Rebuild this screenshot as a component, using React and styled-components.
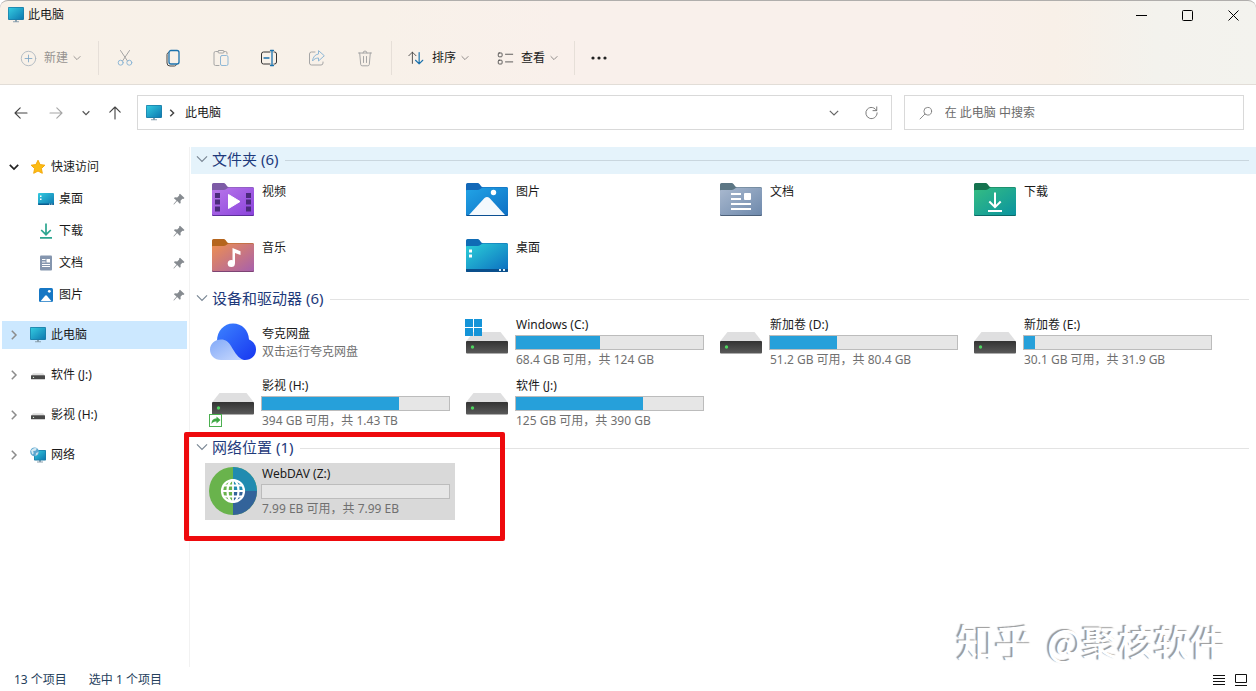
import React from 'react';
import styled, { createGlobalStyle, css } from 'styled-components';

const GlobalStyle = createGlobalStyle`
  * {
    box-sizing: border-box;
  }
  body {
    margin: 0;
    background: #fff;
    color: #1a1a1a;
    font-family: 'Noto Sans', 'Noto Sans CJK SC', sans-serif;
    font-size: 12px;
    line-height: 16px;
  }
  button,
  input {
    font: inherit;
    color: inherit;
  }
  svg {
    display: block;
    flex: none;
  }
`;

const plainButton = css`
  display: flex;
  align-items: center;
  padding: 0;
  border: 0;
  background: none;
  text-align: left;
`;

const Window = styled.div`
  display: flex;
  flex-direction: column;
  min-height: 100vh;
`;

const Header = styled.header`
  border-top: 1px solid #b0aeac;
  border-bottom: 1px solid #e2ddd7;
  border-radius: 8px 8px 0 0;
  background: linear-gradient(
    90deg,
    #f8f1e8 0%,
    #f8f1e9 30%,
    #f9f0eb 45%,
    #f9f0eb 76%,
    #f8f0e8 84%,
    #f3f2ed 92%,
    #f3f3ee 100%
  );
`;

const TitleBar = styled.div`
  display: flex;
  align-items: center;
  height: 30px;
  padding: 0 0 2px 8px;
`;

const WindowTitle = styled.h1`
  flex: 1;
  margin: 0 0 0 4px;
  font-size: 12px;
  font-weight: 400;
`;

const CaptionButton = styled.button`
  ${plainButton};
  justify-content: center;
  width: 46px;
  height: 28px;
`;

const Toolbar = styled.div`
  display: flex;
  align-items: center;
  height: 53px;
  padding-left: 20px;
`;

const Divider = styled.span`
  width: 1px;
  height: 34px;
  margin: 0 ${({ $right = 2 }) => $right}px 0 ${({ $left = 2 }) => $left}px;
  background: #e6dfd8;
`;

const IconButton = styled.button`
  ${plainButton};
  justify-content: center;
  width: ${({ $width = 48 }) => $width}px;
  height: 34px;
  color: ${({ disabled }) => (disabled ? '#a6a6a6' : '#444')};
`;

const MenuButton = styled.button`
  ${plainButton};
  gap: 7px;
  height: 34px;
  margin-right: ${({ $right = 0 }) => $right}px;
  padding-top: 1px;
  color: ${({ disabled }) => (disabled ? '#969390' : '#1a1a1a')};

  svg:last-child {
    margin-left: -2px;
  }
`;

const AddressRow = styled.div`
  display: flex;
  align-items: center;
  padding: 10px 12px 17px 4px;
`;

const AddressBar = styled.div`
  display: flex;
  flex: 753 1 0;
  align-items: center;
  height: 35px;
  margin: 0 12px 0 5px;
  padding-left: 8px;
  border: 1px solid #d9d9d9;
`;

const Crumb = styled.button`
  ${plainButton};
  flex: 1;
  gap: 5px;
  margin-left: 6px;
`;

const SearchBox = styled.label`
  display: flex;
  flex: 342 1 0;
  align-items: center;
  gap: 12px;
  height: 35px;
  border: 1px solid #d9d9d9;

  svg {
    margin-left: 14px;
  }
`;

const SearchInput = styled.input`
  flex: 1;
  min-width: 0;
  padding: 0;
  border: 0;
  outline: 0;
  background: none;

  &::placeholder {
    color: #6b6b6b;
    opacity: 1;
  }
`;

const Body = styled.div`
  display: flex;
  flex: 1;
`;

const Sidebar = styled.nav`
  flex: none;
  width: 190px;
  padding: 6px 2px 0;
  border-right: 1px solid #f2f2f2;
`;

const TreeList = styled.ul`
  display: flex;
  flex-direction: column;
  gap: ${({ $nested }) => ($nested ? 4 : 12)}px;
  margin: ${({ $nested }) => ($nested ? '4px 0 0' : 0)};
  padding: 0;
  list-style: none;
`;

const TreeRow = styled.a`
  display: flex;
  align-items: center;
  gap: 5px;
  height: 28px;
  padding: 0 2px 0 ${({ $nested }) => ($nested ? 36 : 7)}px;
  background: ${({ $selected }) => ($selected ? '#cce8ff' : 'none')};
  color: inherit;
  text-decoration: none;
`;

const TreeArrow = styled.span`
  width: 16px;
  color: ${({ $open }) => ($open ? '#222' : '#8c8c8c')};
`;

const TreeLabel = styled.span`
  flex: 1;
`;

const Content = styled.main`
  flex: 1;
  min-width: 0;
  padding-left: 1px;
`;

const Group = styled.section`
  position: relative;
`;

const GroupHeader = styled.h2`
  display: flex;
  align-items: center;
  gap: 7px;
  height: 27px;
  margin: 0;
  padding-right: 7px;
  background: ${({ $active }) => ($active ? '#e5f3fb' : 'none')};
  color: #1e3a7b;
  font-size: 15px;
  font-weight: 400;
  line-height: 20px;

  &::after {
    content: '';
    flex: 1;
    height: 1px;
    background: ${({ $active }) => ($active ? '#c9d6de' : '#e3e3e3')};
  }
`;

const GroupToggle = styled.button`
  ${plainButton};
  gap: 4px;
  padding: 0 0 3px 5px;
`;

const FolderGrid = styled.div`
  display: grid;
  grid-template-columns: repeat(auto-fill, 250px);
  column-gap: 4px;
  padding-left: 14px;
`;

const DriveGrid = styled(FolderGrid)`
  row-gap: 4px;
  padding-top: 1px;
  padding-bottom: 3px;
`;

const Tile = styled.button`
  ${plainButton};
  gap: 4px;
  height: 57px;
  padding: 0 5px 0 4px;
  background: ${({ $selected }) => ($selected ? '#d9d9d9' : 'none')};
`;

const FolderTile = styled(Tile)`
  align-items: flex-start;
  height: 56px;
  padding-top: 8px;
`;

const TileIcon = styled.span`
  display: flex;
  flex: none;
  justify-content: center;
  width: 48px;
`;

const TileText = styled.span`
  display: flex;
  flex: 1;
  flex-direction: column;
  gap: 2px;
`;

const Name = styled.span`
  padding-left: 1px;
`;

const FolderName = styled(Name)`
  padding-top: 2px;
`;

const Note = styled(Name)`
  color: #707070;
`;

const Meter = styled.span`
  height: 15px;
  border: 1px solid #bcbcbc;
  background: #e6e6e6;
`;

const MeterFill = styled.span`
  display: block;
  height: 100%;
  background: #26a0da;
`;

const Highlight = styled.div`
  position: absolute;
  top: -3px;
  left: -7px;
  width: 321px;
  height: 109px;
  border: 5px solid #ee0a0d;
  border-radius: 2px;
  pointer-events: none;
`;

const StatusBar = styled.footer`
  display: flex;
  align-items: center;
  gap: 22px;
  height: 24px;
  padding: 1px 8px 0 14px;
  color: #24405c;
`;

const ViewModes = styled.div`
  display: flex;
  gap: 8px;
  margin-left: auto;
  color: #111;
`;

const ModeButton = styled.button`
  ${plainButton};
`;

const Watermark = styled.div`
  position: absolute;
  right: 30px;
  bottom: 24px;
  display: flex;
  align-items: center;
  gap: 14px;
  color: #fff;
  font-family: 'Noto Sans CJK SC', sans-serif;
  font-size: 36px;
  font-weight: 500;
  line-height: 52px;
  text-shadow: -2px -1px 1px #999;
  pointer-events: none;
`;

const Brand = styled.span`
  font-size: 38px;
`;

const Chevron = ({ size = 8, width = 1.2, turn = 0, color = 'currentColor' }) => (
  <svg width={size} height={size} viewBox="0 0 10 10" fill="none" stroke={color} strokeWidth={width}>
    <path d="M.8 2.8 5 7l4.2-4.2" transform={`rotate(${turn} 5 5)`} />
  </svg>
);

const Line = ({ size = 20, color = 'currentColor', children }) => (
  <svg width={size} height={size} viewBox="0 0 20 20" fill="none" stroke={color} strokeLinecap="round" strokeLinejoin="round">
    {children}
  </svg>
);

const MonitorIcon = () => (
  <svg width="16" height="16" viewBox="0 0 16 16">
    <defs>
      <linearGradient id="monitor" x1="0" y1="0" x2="1" y2="1">
        <stop offset="0" stopColor="#34cbe0" />
        <stop offset="1" stopColor="#0d78b0" />
      </linearGradient>
    </defs>
    <path fill="#8aa0ae" d="M7 12h2v2.2h2v1H5v-1h2z" />
    <rect width="16" height="13" rx="1" fill="#1b7ba6" />
    <rect x=".7" y=".7" width="14.6" height="11.6" rx=".5" fill="url(#monitor)" />
  </svg>
);

const NetworkIcon = () => (
  <svg width="16" height="16" viewBox="0 0 16 16">
    <path fill="#8aa0ae" d="M9 13h2v1.6h2v1H7v-1h2z" />
    <rect x="4" y="3" width="12" height="10.5" rx=".8" fill="#1b7ba6" />
    <rect x="4.7" y="3.7" width="10.6" height="9" fill="url(#monitor)" />
    <circle cx="4.6" cy="4.8" r="4.4" fill="#5ba6cf" />
    <path d="M1 3.6c2-2.6 4-3.2 6-2L5.5 3.8 3.2 4l.5 2.5-1.5 1z" fill="#d5e9f2" />
    <path d="m6 6 2.5-1-.8 2.6L5.5 9z" fill="#c5dfeb" />
  </svg>
);

const StarIcon = () => (
  <svg width="16" height="16" viewBox="0 0 16 16">
    <path
      d="m8 1.2 2.1 4.4 4.8.6-3.5 3.3.9 4.8L8 12l-4.3 2.3.9-4.8-3.5-3.3 4.8-.6z"
      fill="#fbbc14"
      stroke="#f5a90a"
      strokeLinejoin="round"
    />
  </svg>
);

const SmallDesktopIcon = () => (
  <svg width="16" height="16" viewBox="0 0 16 16">
    <rect y="2" width="16" height="12" rx="1" fill="url(#monitor)" />
    <path d="M2 4.5h1.5V6H2zM2 7.500h1.500V9H2z" fill="#fff" />
    <path d="M0 12.500h16v.5a1 1 0 0 1-1 1H1a1 1 0 0 1-1-1z" fill="#0b5c8f" />
    <path d="M11 12.700h1.200v.8H11zm2.200 0h1.200v.8h-1.200z" fill="#fff" />
  </svg>
);

const SmallDownloadIcon = () => (
  <svg width="16" height="16" viewBox="0 0 16 16" fill="none" stroke="#2ba58f" strokeWidth="1.700">
    <path d="M8 .5v11M3.200 7 8 11.700 12.800 7M2 14.800h12" />
  </svg>
);

const SmallDocumentIcon = () => (
  <svg width="16" height="16" viewBox="0 0 16 16">
    <rect x="2" y=".5" width="12" height="15" rx="1" fill="#8495ae" />
    <path d="M4 4.500h3.500M4 7h3.500M4 9.500h8M4 11.500h8" stroke="#fff" />
    <path d="M8.500 4H12v3.500H8.500z" fill="#fff" />
  </svg>
);

const SmallPictureIcon = () => (
  <svg width="16" height="16" viewBox="0 0 16 16">
    <rect x="1" y="1" width="14" height="14" rx="1.500" fill="#1677c4" />
    <path d="m2.500 14.300 4.600-5.500q.9-.9 1.800 0l4.600 5.500z" fill="#fff" />
    <circle cx="11.300" cy="4.300" r="1.400" fill="#fff" />
  </svg>
);

const SmallDriveIcon = () => (
  <svg width="16" height="16" viewBox="0 0 16 16">
    <path d="M3 6.200h10l2 2.300H1z" fill="#dcdcdc" />
    <rect x="1" y="8.300" width="14" height="4" rx=".5" fill="#484848" />
    <circle cx="3.500" cy="10.400" r=".7" fill="#d6e8d6" />
  </svg>
);

const PinIcon = () => (
  <svg width="12" height="12" viewBox="0 0 12 12" fill="#868b90">
    <path d="m7 .8 4.500 4.300-1.200.8-.9-.2-1.900 2 .2 2.200-.9.8-2.700-2.600L1 11.500l-.6-.3L3.500 7.600.9 5.200l1-.9 2.300.1 2-2-.1-.9z" />
  </svg>
);

const Folder = ({ id, tab, from, to, edge, children }) => (
  <svg width="42" height="34" viewBox="0 0 42 34">
    <defs>
      <linearGradient id={id} x1="0" y1="0" x2="1" y2="1">
        <stop offset="0" stopColor={from} />
        <stop offset="1" stopColor={to} />
      </linearGradient>
    </defs>
    <path d="M0 2.500A1.500 1.500 0 0 1 1.500 1H12c1.600 0 3 4 4.500 4H40.500A1.500 1.500 0 0 1 42 6.500V20H0z" fill={tab} />
    <path
      d="M0 8.500Q0 8 .8 8H12c2.500 0 3-2.400 5-2.400H40.500A1.500 1.500 0 0 1 42 7v25.500a1.500 1.500 0 0 1-1.500 1.500h-39A1.500 1.500 0 0 1 0 32.500z"
      fill={`url(#${id})`}
    />
    <path d="M0 32.200a1.800 1.800 0 0 0 1.500.8h39a1.800 1.800 0 0 0 1.500-.8v.3a1.500 1.500 0 0 1-1.500 1.500h-39A1.500 1.500 0 0 1 0 32.500z" fill={edge} />
    {children}
  </svg>
);

const VideosFolder = () => (
  <Folder id="videos" tab="#7d5ba6" from="#b978ea" to="#8a42dc" edge="#5b2f99">
    <path d="M3 11h5v5H3zM3 17.500h5v5H3zM3 24.500h5v5H3zM34 11h5v5h-5zM34 17.500h5v5h-5zM34 24.500h5v5h-5z" fill="#4b2a7c" />
    <path d="M16.500 12.500v14l11.500-7z" fill="#fff" stroke="#fff" strokeLinejoin="round" />
  </Folder>
);

const PicturesFolder = () => (
  <Folder id="pictures" tab="#1268b8" from="#22a4e6" to="#0d6fc4" edge="#0b4f92">
    <path d="M3 33 18.500 16q2.500-2 5 0L39 33z" fill="#f4f9fd" />
    <circle cx="27.500" cy="10.500" r="2.700" fill="#fff" />
  </Folder>
);

const DocumentsFolder = () => (
  <Folder id="documents" tab="#5c7684" from="#a9b9cf" to="#6d88ab" edge="#4c6079">
    <path d="M11 12h10M11 17h10M11 22h20M11 27h20" stroke="#fff" strokeWidth="2" />
    <rect x="24" y="11" width="7" height="7" rx="1" fill="#fff" />
  </Folder>
);

const DownloadsFolder = () => (
  <Folder id="downloads" tab="#15734f" from="#35bd82" to="#0a93a0" edge="#0b6a68">
    <path d="M21 10.500v14.500M15.300 19.500 21 25.200l5.700-5.700M14 29h14" stroke="#fff" strokeWidth="2" fill="none" />
  </Folder>
);

const MusicFolder = () => (
  <Folder id="music" tab="#b5651d" from="#ee9050" to="#a65fae" edge="#7d4474">
    <circle cx="19.300" cy="25.500" r="3.600" fill="#fff" />
    <path d="M20.500 25.500V10l8 3.200V17l-5.500-2v10.500z" fill="#fff" />
  </Folder>
);

const DesktopFolder = () => (
  <Folder id="desktop" tab="#0f6cb5" from="#2cd0d8" to="#0b6cc0" edge="#0a4a86">
    <path d="M3 11.500h3v3H3zM3 16.500h3v3H3z" fill="#fff" />
    <path d="M0 31h42v1.500a1.500 1.500 0 0 1-1.500 1.500h-39A1.500 1.500 0 0 1 0 32.500z" fill="#0a4f8c" />
    <path d="M33 31h2v2h-2zM37 31h2v2h-2z" fill="#d8edf8" />
  </Folder>
);

const DriveIcon = ({ windows, shared }) => (
  <svg width="48" height="48" viewBox="0 0 48 48">
    <defs>
      <linearGradient id="drive" x1="0" y1="0" x2="0" y2="1">
        <stop offset="0" stopColor="#333" />
        <stop offset="1" stopColor="#5a5a5a" />
      </linearGradient>
    </defs>
    <path d="M10.500 13h27L45 22.500H3z" fill="#dfdfe0" />
    <rect x="3" y="22" width="42" height="12.500" rx="1" fill="url(#drive)" />
    <circle cx="9.500" cy="28" r="1.700" fill="#4ed35f" />
    {windows && <path d="M2 0h8v8H2zM11 0h8v8h-8zM2 9h8v8H2zM11 9h8v8h-8z" fill="#1494d8" />}
    {shared && (
      <>
        <rect x=".5" y="34.500" width="12" height="12" fill="#fff" stroke="#4caf50" />
        <path d="M2.500 44c0-4 2-5.500 5-5.500v-2l4 3.500-4 3.500v-2c-2 0-3.800.5-5 2.500z" fill="#3fa845" />
      </>
    )}
  </svg>
);

const CloudIcon = () => (
  <svg width="48" height="40" viewBox="0 0 48 40">
    <defs>
      <linearGradient id="cloud" x1="0" y1="0" x2="1" y2="1">
        <stop offset="0" stopColor="#3c83ff" />
        <stop offset="1" stopColor="#1736f0" />
      </linearGradient>
      <linearGradient id="cloudFront" x1="0" y1="0" x2="1" y2="1">
        <stop offset="0" stopColor="#83aaf8" />
        <stop offset="1" stopColor="#c9d9fd" />
      </linearGradient>
    </defs>
    <path d="M8 18C8 8 15 .5 24 .5S39.500 7 40 16.500c4.500 2 7 5.500 7 10 0 6-4.500 10.500-11 10.500H24z" fill="url(#cloud)" />
    <path d="M12 16.500c5 0 7.500 2.500 10 6.500 4.500 7.500 7 12 13 14H12C5.500 37 1 32.500 1 26.700s4.500-10.200 11-10.200z" fill="url(#cloudFront)" />
  </svg>
);

const WebDavIcon = () => (
  <svg width="48" height="50" viewBox="0 0 48 50">
    <circle cx="24" cy="24" r="24" fill="#69b34c" />
    <path d="M24 0a24 24 0 0 1 24 24H24z" fill="#218bb0" />
    <path d="M48 24a24 24 0 0 1-24 24V24z" fill="#33639a" />
    <g fill="none" stroke="#fff" strokeWidth="2.200">
      <circle cx="24" cy="24" r="11" />
      <ellipse cx="24" cy="24" rx="5.500" ry="11" />
      <path d="M24 13v22M13 24h22M15 18.500h18M15 29.500h18" strokeWidth="1.800" />
    </g>
  </svg>
);

const quickAccess = [
  { name: '桌面', icon: <SmallDesktopIcon /> },
  { name: '下载', icon: <SmallDownloadIcon /> },
  { name: '文档', icon: <SmallDocumentIcon /> },
  { name: '图片', icon: <SmallPictureIcon /> },
];

const places = [
  { name: '此电脑', icon: <MonitorIcon />, selected: true },
  { name: '软件 (J:)', icon: <SmallDriveIcon /> },
  { name: '影视 (H:)', icon: <SmallDriveIcon /> },
  { name: '网络', icon: <NetworkIcon /> },
];

const folders = [
  { name: '视频', icon: <VideosFolder /> },
  { name: '图片', icon: <PicturesFolder /> },
  { name: '文档', icon: <DocumentsFolder /> },
  { name: '下载', icon: <DownloadsFolder /> },
  { name: '音乐', icon: <MusicFolder /> },
  { name: '桌面', icon: <DesktopFolder /> },
];

const drives = [
  { name: '夸克网盘', note: '双击运行夸克网盘', icon: <CloudIcon /> },
  { name: 'Windows (C:)', note: '68.4 GB 可用，共 124 GB', used: 45, icon: <DriveIcon windows /> },
  { name: '新加卷 (D:)', note: '51.2 GB 可用，共 80.4 GB', used: 36, icon: <DriveIcon /> },
  { name: '新加卷 (E:)', note: '30.1 GB 可用，共 31.9 GB', used: 6, icon: <DriveIcon /> },
  { name: '影视 (H:)', note: '394 GB 可用，共 1.43 TB', used: 73, icon: <DriveIcon shared /> },
  { name: '软件 (J:)', note: '125 GB 可用，共 390 GB', used: 68, icon: <DriveIcon /> },
];

const networkDrives = [
  { name: 'WebDAV (Z:)', note: '7.99 EB 可用，共 7.99 EB', used: 0, selected: true, icon: <WebDavIcon /> },
];

const GroupTitle = ({ active, children }) => (
  <GroupHeader $active={active}>
    <GroupToggle type="button" aria-expanded="true">
      <Chevron size={12} width={1} color="#7a8794" />
      {children}
    </GroupToggle>
  </GroupHeader>
);

const Drive = ({ name, note, used, selected, icon }) => (
  <Tile type="button" $selected={selected}>
    <TileIcon>{icon}</TileIcon>
    <TileText>
      <Name>{name}</Name>
      {used !== undefined && (
        <Meter>
          <MeterFill style={{ width: `${used}%` }} />
        </Meter>
      )}
      <Note>{note}</Note>
    </TileText>
  </Tile>
);

const CommandBar = () => (
  <Toolbar>
    <MenuButton type="button" disabled>
      <Line size={17} color="#a9b4bd">
        <circle cx="10" cy="10" r="8.500" />
        <path d="M10 6v8M6 10h8" stroke="#7da7c6" />
      </Line>
      新建
      <Chevron />
    </MenuButton>
    <Divider $left={17} />
    <IconButton type="button" aria-label="剪切" disabled>
      <Line>
        <path d="M5.500 2.500 12.500 13M14.500 2.500 7.500 13" />
        <circle cx="5.700" cy="14.700" r="2.500" stroke="#8fb8d6" />
        <circle cx="14.300" cy="14.700" r="2.500" stroke="#8fb8d6" />
      </Line>
    </IconButton>
    <IconButton type="button" aria-label="复制">
      <Line>
        <path d="M5.500 4.500q-1.500.5-1.500 2v8.500a3 3 0 0 0 3 3h4.500q1.500 0 2-1.500" stroke="#444" />
        <rect x="6" y="2.500" width="10" height="13.500" rx="2" stroke="#1b72ad" strokeWidth="1.300" />
      </Line>
    </IconButton>
    <IconButton type="button" aria-label="粘贴" disabled>
      <Line>
        <path d="M7 3.500H4.500A1.500 1.500 0 0 0 3 5v11a1.500 1.500 0 0 0 1.500 1.500H8M13 3.500h1.500A1.500 1.500 0 0 1 16 5v1" />
        <rect x="7" y="2.500" width="6" height="2.500" rx="1" />
        <rect x="9.500" y="7.500" width="7.500" height="10" rx="1.500" stroke="#8fb8d6" />
      </Line>
    </IconButton>
    <IconButton type="button" aria-label="重命名">
      <Line>
        <path d="M11 4H4.500a2 2 0 0 0-2 2v8a2 2 0 0 0 2 2H11M15 4h.5a2 2 0 0 1 2 2v8a2 2 0 0 1-2 2H15" stroke="#333" />
        <path d="M13 2.500v15M11.500 2.500h3M11.500 17.500h3M5 10h5" stroke="#1b72ad" strokeWidth="1.300" />
      </Line>
    </IconButton>
    <IconButton type="button" aria-label="共享" disabled>
      <Line>
        <path d="M8 4H4.500a2 2 0 0 0-2 2v9a2 2 0 0 0 2 2h9.500a2 2 0 0 0 2-2v-1" />
        <path d="M11.500 3v3C8 6.500 6 9 5.500 13c1.500-2 3.500-3 6-3v3L17 8z" stroke="#8fb8d6" />
      </Line>
    </IconButton>
    <IconButton type="button" aria-label="删除" disabled>
      <Line>
        <path d="M3.500 5h13M8 5a2 2 0 0 1 4 0M4.700 5l1 11.500a1.500 1.500 0 0 0 1.500 1.300h5.600a1.500 1.500 0 0 0 1.500-1.300l1-11.500M8.500 8.500v6M11.500 8.500v6" />
      </Line>
    </IconButton>
    <Divider $right={15} />
    <MenuButton type="button" $right={28}>
      <Line size={18}>
        <path d="M6 16V3.500M2 7.500l4-4 4 4" stroke="#444" />
        <path d="M13.500 4v12.500M9.500 12.500l4 4 4-4" stroke="#1b72ad" strokeWidth="1.300" />
      </Line>
      排序
      <Chevron color="#8c8886" />
    </MenuButton>
    <MenuButton type="button">
      <Line size={17}>
        <rect x="1.500" y="3.500" width="4.500" height="4.500" rx="1" stroke="#444" />
        <rect x="1.500" y="12" width="4.500" height="4.500" rx="1" stroke="#444" />
        <path d="M10 5h8.500M10 14h8.500" stroke="#444" />
      </Line>
      查看
      <Chevron color="#8c8886" />
    </MenuButton>
    <Divider $left={16} $right={0} />
    <IconButton type="button" aria-label="更多">
      <svg width="18" height="4" viewBox="0 0 18 4" fill="#222">
        <circle cx="3" cy="2" r="1.600" />
        <circle cx="9" cy="2" r="1.600" />
        <circle cx="15" cy="2" r="1.600" />
      </svg>
    </IconButton>
  </Toolbar>
);

const Navigation = () => (
  <AddressRow>
    <IconButton type="button" aria-label="后退" $width={34}>
      <Line size={16}>
        <path d="M17.500 10H3M9 3.500 2.500 10 9 16.500" strokeWidth="1.400" />
      </Line>
    </IconButton>
    <IconButton type="button" aria-label="前进" $width={36} disabled>
      <Line size={16}>
        <path d="M2.500 10H17M11 3.500l6.500 6.500-6.500 6.500" strokeWidth="1.400" />
      </Line>
    </IconButton>
    <IconButton type="button" aria-label="最近位置" $width={24}>
      <Chevron width={1.5} color="#555" />
    </IconButton>
    <IconButton type="button" aria-label="上移" $width={34}>
      <Line size={16}>
        <path d="M10 17.500V3M3.500 9 10 2.500 16.500 9" strokeWidth="1.400" />
      </Line>
    </IconButton>
    <AddressBar>
      <MonitorIcon />
      <Crumb type="button">
        <Chevron turn={-90} width={1.8} color="#444" />
        <WindowTitle as="span">此电脑</WindowTitle>
      </Crumb>
      <IconButton type="button" aria-label="历史记录" $width={38}>
        <Chevron size={10} color="#666" />
      </IconButton>
      <IconButton type="button" aria-label="刷新" $width={38}>
        <Line size={15} color="#777">
          <path d="M16.800 7.500A7.500 7.500 0 1 0 17.500 10.500M17 2.500v5h-5" strokeWidth="1.300" />
        </Line>
      </IconButton>
    </AddressBar>
    <SearchBox>
      <Line size={14} color="#808080">
        <circle cx="12.500" cy="7.500" r="5.500" strokeWidth="1.300" />
        <path d="m8.500 11.500-7 7" strokeWidth="1.300" />
      </Line>
      <SearchInput type="search" placeholder="在 此电脑 中搜索" aria-label="搜索" />
    </SearchBox>
  </AddressRow>
);

const Tree = () => (
  <Sidebar>
    <TreeList>
      <li>
        <TreeRow href="#quick">
          <TreeArrow $open>
            <Chevron size={10} width={1.7} />
          </TreeArrow>
          <StarIcon />
          <TreeLabel>快速访问</TreeLabel>
        </TreeRow>
        <TreeList $nested>
          {quickAccess.map(({ name, icon }) => (
            <li key={name}>
              <TreeRow href="#pinned" $nested>
                {icon}
                <TreeLabel>{name}</TreeLabel>
                <PinIcon />
              </TreeRow>
            </li>
          ))}
        </TreeList>
      </li>
      {places.map(({ name, icon, selected }) => (
        <li key={name}>
          <TreeRow href="#place" $selected={selected}>
            <TreeArrow>
              <Chevron size={10} width={1.5} turn={-90} />
            </TreeArrow>
            {icon}
            <TreeLabel>{name}</TreeLabel>
          </TreeRow>
        </li>
      ))}
    </TreeList>
  </Sidebar>
);

export default function App() {
  return (
    <Window>
      <GlobalStyle />
      <Header>
        <TitleBar>
          <MonitorIcon />
          <WindowTitle>此电脑</WindowTitle>
          <CaptionButton type="button" aria-label="最小化">
            <svg width="11" height="11" viewBox="0 0 11 11" stroke="#000">
              <path d="M0 5.500h11" />
            </svg>
          </CaptionButton>
          <CaptionButton type="button" aria-label="最大化">
            <svg width="11" height="11" viewBox="0 0 11 11" stroke="#000" fill="none">
              <rect x=".5" y=".5" width="10" height="10" rx="1" />
            </svg>
          </CaptionButton>
          <CaptionButton type="button" aria-label="关闭">
            <svg width="11" height="11" viewBox="0 0 11 11" stroke="#000">
              <path d="m.5.5 10 10m0-10-10 10" />
            </svg>
          </CaptionButton>
        </TitleBar>
        <CommandBar />
      </Header>
      <Navigation />
      <Body>
        <Tree />
        <Content>
          <Group>
            <GroupTitle active>文件夹 (6)</GroupTitle>
            <FolderGrid>
              {folders.map(({ name, icon }) => (
                <FolderTile type="button" key={name}>
                  <TileIcon>{icon}</TileIcon>
                  <FolderName>{name}</FolderName>
                </FolderTile>
              ))}
            </FolderGrid>
          </Group>
          <Group>
            <GroupTitle>设备和驱动器 (6)</GroupTitle>
            <DriveGrid>
              {drives.map((drive) => (
                <Drive key={drive.name} {...drive} />
              ))}
            </DriveGrid>
          </Group>
          <Group>
            <GroupTitle>网络位置 (1)</GroupTitle>
            <DriveGrid>
              {networkDrives.map((drive) => (
                <Drive key={drive.name} {...drive} />
              ))}
            </DriveGrid>
            <Highlight />
          </Group>
        </Content>
      </Body>
      <StatusBar>
        <span>13 个项目</span>
        <span>选中 1 个项目</span>
        <ViewModes>
          <ModeButton type="button" aria-label="详细信息">
            <svg width="14" height="12" viewBox="0 0 14 12" stroke="currentColor">
              <path d="M1 1.500h12M1 4.500h12M1 7.500h12M1 10.500h12" />
            </svg>
          </ModeButton>
          <ModeButton type="button" aria-label="大图标">
            <svg width="14" height="12" viewBox="0 0 14 12" stroke="currentColor" fill="none">
              <path d="M1.500.5h11v8h-11zM1 11.500h12" />
            </svg>
          </ModeButton>
        </ViewModes>
      </StatusBar>
      <Watermark>
        <Brand>知乎</Brand>
        <span>@聚核软件</span>
      </Watermark>
    </Window>
  );
}
